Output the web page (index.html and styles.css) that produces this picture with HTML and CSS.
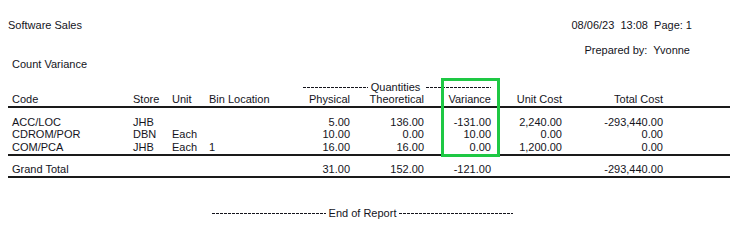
FILE: index.html
```html
<!DOCTYPE html>
<html>
<head>
<meta charset="utf-8">
<link rel="stylesheet" href="styles.css">
</head>
<body>
<div class="report">
  <div class="title-row">
    <span class="title">Software Sales</span>
    <span class="stamp">08/06/23  13:08  Page: 1</span>
  </div>
  <div class="prepared">Prepared by:  Yvonne</div>
  <div class="subtitle">Count Variance</div>

  <div class="qty-header">
    <span class="dashes"></span>
    <span class="qty-label">Quantities</span>
    <span class="dashes"></span>
  </div>

  <div class="grid head">
    <span>Code</span><span>Store</span><span>Unit</span><span>Bin Location</span>
    <span class="num">Physical</span><span class="num">Theoretical</span><span class="num">Variance</span>
    <span class="num">Unit Cost</span><span class="num">Total Cost</span><span></span>
  </div>

  <div class="body">
    <div class="grid row">
      <span>ACC/LOC</span><span>JHB</span><span></span><span></span>
      <span class="num">5.00</span><span class="num">136.00</span><span class="num">-131.00</span>
      <span class="num">2,240.00</span><span class="num">-293,440.00</span><span></span>
    </div>
    <div class="grid row">
      <span>CDROM/POR</span><span>DBN</span><span>Each</span><span></span>
      <span class="num">10.00</span><span class="num">0.00</span><span class="num">10.00</span>
      <span class="num">0.00</span><span class="num">0.00</span><span></span>
    </div>
    <div class="grid row">
      <span>COM/PCA</span><span>JHB</span><span>Each</span><span>1</span>
      <span class="num">16.00</span><span class="num">16.00</span><span class="num">0.00</span>
      <span class="num">1,200.00</span><span class="num">0.00</span><span></span>
    </div>
  </div>

  <div class="grid total">
    <span>Grand Total</span><span></span><span></span><span></span>
    <span class="num">31.00</span><span class="num">152.00</span><span class="num">-121.00</span>
    <span class="num"></span><span class="num">-293,440.00</span><span></span>
  </div>

  <div class="end">
    <span class="dashes"></span>
    <span class="end-label">End of Report</span>
    <span class="dashes"></span>
  </div>

  <div class="highlight"></div>
</div>
</body>
</html>
```

FILE: styles.css
```css
html, body {
  margin: 0;
  padding: 0;
  background: #ffffff;
}

body {
  font-family: "Liberation Sans", Arial, sans-serif;
  font-size: 11px;
  color: #14141c;
  width: 740px;
  height: 245px;
  overflow: hidden;
}

.report {
  position: relative;
  padding-top: 19px;
}

.title-row {
  display: flex;
  justify-content: space-between;
  line-height: 12px;
  padding-left: 8px;
  padding-right: 48px;
}

.stamp,
.prepared {
  white-space: pre;
}

.prepared {
  line-height: 12px;
  margin-top: 13px;
  text-align: right;
  padding-right: 50px;
}

.subtitle {
  line-height: 12px;
  margin-top: 2px;
  padding-left: 12px;
}

.qty-header {
  display: flex;
  align-items: center;
  gap: 3px;
  line-height: 12px;
  margin-top: 11px;
  margin-left: 303px;
  width: 188px;
}

.dashes {
  flex: 1;
  height: 1px;
  margin-top: 1px;
  background: repeating-linear-gradient(to right, #14141c 0 3px, transparent 3px 4px);
}

.qty-label {
  padding-right: 3px;
}

.grid {
  display: grid;
  grid-template-columns: 121px 39px 37px 81px 60px 74px 67px 71px 101px 1fr;
  margin-left: 8px;
  width: 722px;
  padding-left: 4px;
  box-sizing: border-box;
}

.num {
  text-align: right;
}

.head {
  line-height: 12px;
  padding-bottom: 1px;
  border-bottom: 2px solid #1a1a1a;
}

.body {
  margin-left: 8px;
  width: 722px;
  padding-top: 7.75px;
  padding-bottom: 0.75px;
  border-bottom: 2px solid #1a1a1a;
}

.body .grid {
  margin-left: 0;
}

.row {
  line-height: 12.5px;
}

.total {
  line-height: 12px;
  padding-top: 7px;
  padding-bottom: 1px;
  border-bottom: 2px solid #1a1a1a;
}

.end {
  display: flex;
  align-items: center;
  gap: 3px;
  line-height: 12px;
  margin-top: 29px;
  margin-left: 212px;
  width: 301px;
}

.highlight {
  position: absolute;
  left: 441px;
  top: 78px;
  width: 59px;
  height: 79px;
  box-sizing: border-box;
  border: 3px solid #1ec844;
}
```
